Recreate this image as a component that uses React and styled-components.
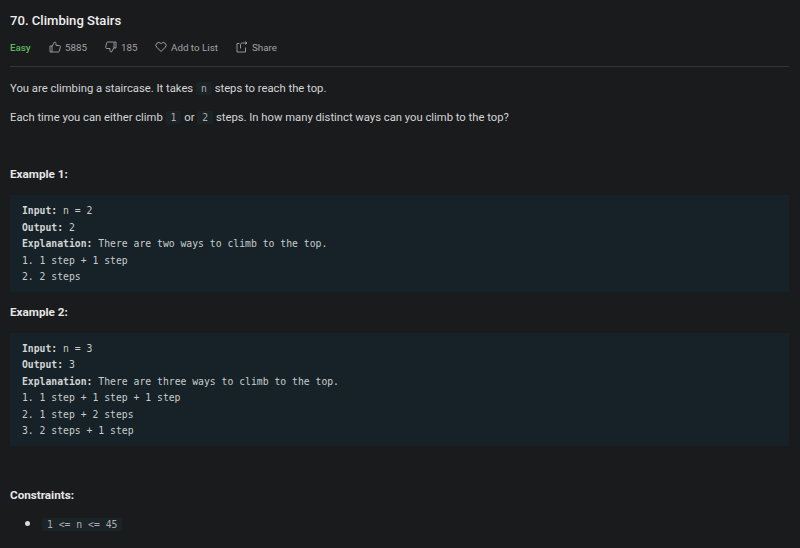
import React from "react";
import styled, { createGlobalStyle } from "styled-components";

const Global = createGlobalStyle`
  html, body {
    margin: 0;
    padding: 0;
    background: #1a1b1d;
    overflow: hidden;
  }
`;

const Page = styled.div`
  width: 800px;
  height: 548px;
  box-sizing: border-box;
  padding: 13px 11px 0 10px;
  background: #1a1b1d;
  color: #d8d9da;
  font-family: Roboto, "Open Sans", sans-serif;
  font-size: 11.25px;
  overflow: hidden;
`;

const Title = styled.h1`
  margin: 0;
  font-size: 13.1px;
  line-height: 16px;
  font-weight: 500;
  color: #eeeeee;
`;

const Meta = styled.div`
  display: flex;
  align-items: center;
  height: 20px;
  margin-top: 8px;
  padding-bottom: 9px;
  border-bottom: 1px solid #343536;
  font-size: 9.8px;
  color: #a2a3a4;
`;

const Level = styled.span`
  color: #5cb85c;
  font-weight: 500;
  width: 39px;
`;

const Action = styled.span`
  display: inline-flex;
  align-items: center;
  gap: 4px;
  width: ${(props) => props.$width}px;
  svg {
    flex: none;
  }
`;

const Paragraph = styled.p`
  margin: ${(props) => props.$top}px 0 0;
  line-height: 17px;
  font-size: 11.25px;
  color: #d4d5d6;
`;

const Code = styled.code`
  font-family: "DejaVu Sans Mono", "Liberation Mono", monospace;
  font-size: 9.75px;
  color: #a9b0b4;
  background: #1b2327;
  padding: 1px 5px;
  border-radius: 2px;
`;

const Heading = styled.div`
  margin-top: ${(props) => props.$top}px;
  font-size: 11.7px;
  line-height: 16px;
  font-weight: 700;
  color: #e6e6e6;
`;

const Pre = styled.pre`
  margin: 13px 0 0;
  padding: 8px 12px 6px;
  background: #162227;
  font-family: "DejaVu Sans Mono", "Liberation Mono", monospace;
  font-size: 9.75px;
  line-height: 16.5px;
  color: #c9cccd;
`;

const Label = styled.strong`
  font-weight: 700;
  color: #d2d4d5;
`;

const List = styled.ul`
  margin: 11px 0 0;
  padding: 0 0 0 26px;
  li {
    margin-left: 6px;
    line-height: 17px;
    color: #d8d9da;
  }
  li::marker {
    font-size: 17px;
  }
`;

const ThumbUp = () => (
  <svg width="12" height="12" viewBox="0 0 24 24" fill="none" stroke="currentColor" strokeWidth="1.8" strokeLinejoin="round">
    <path d="M2 10h4v12H2zM6 11l5-9c2 0 3 1 3 3v4h7c1 0 2 1 1.700 2.500l-2 8.500c-.2 1-1 2-2 2H6" />
  </svg>
);

const ThumbDown = () => (
  <svg width="12" height="12" viewBox="0 0 24 24" fill="none" stroke="currentColor" strokeWidth="1.8" strokeLinejoin="round">
    <path d="M22 14h-4V2h4zM18 13l-5 9c-2 0-3-1-3-3v-4H3c-1 0-2-1-1.700-2.500l2-8.500c.2-1 1-2 2-2h12" />
  </svg>
);

const Heart = () => (
  <svg width="12" height="12" viewBox="0 0 24 24" fill="none" stroke="currentColor" strokeWidth="2" strokeLinejoin="round">
    <path d="M12 21 3.500 12.500a5.500 5.500 0 0 1 0-7.800 5.500 5.500 0 0 1 7.800 0l.7.7.7-.7a5.500 5.500 0 0 1 7.800 0 5.500 5.500 0 0 1 0 7.800z" />
  </svg>
);

const ShareIcon = () => (
  <svg width="12" height="12" viewBox="0 0 24 24" fill="none" stroke="currentColor" strokeWidth="1.8">
    <path d="M7 5H2v17h17v-9" />
    <path d="M9 15V8c0-2 1-4 4-4h9M18 1l4 3-4 3" />
  </svg>
);

export default function App() {
  return (
    <Page>
      <Global />
      <Title>70. Climbing Stairs</Title>
      <Meta>
        <Level>Easy</Level>
        <Action $width={56}><ThumbUp />5885</Action>
        <Action $width={50}><ThumbDown />185</Action>
        <Action $width={81}><Heart />Add to List</Action>
        <Action $width={60}><ShareIcon />Share</Action>
      </Meta>
      <Paragraph $top={13}>
        You are climbing a staircase. It takes <Code>n</Code> steps to reach the top.
      </Paragraph>
      <Paragraph $top={12}>
        Each time you can either climb <Code>1</Code> or <Code>2</Code> steps. In how many distinct ways can you climb to the top?
      </Paragraph>
      <Heading $top={40}>Example 1:</Heading>
      <Pre>
        <Label>Input:</Label> n = 2{"\n"}
        <Label>Output:</Label> 2{"\n"}
        <Label>Explanation:</Label> There are two ways to climb to the top.{"\n"}
        1. 1 step + 1 step{"\n"}
        2. 2 steps
      </Pre>
      <Heading $top={12}>Example 2:</Heading>
      <Pre>
        <Label>Input:</Label> n = 3{"\n"}
        <Label>Output:</Label> 3{"\n"}
        <Label>Explanation:</Label> There are three ways to climb to the top.{"\n"}
        1. 1 step + 1 step + 1 step{"\n"}
        2. 1 step + 2 steps{"\n"}
        3. 2 steps + 1 step
      </Pre>
      <Heading $top={41}>Constraints:</Heading>
      <List>
        <li><Code>1 &lt;= n &lt;= 45</Code></li>
      </List>
    </Page>
  );
}
